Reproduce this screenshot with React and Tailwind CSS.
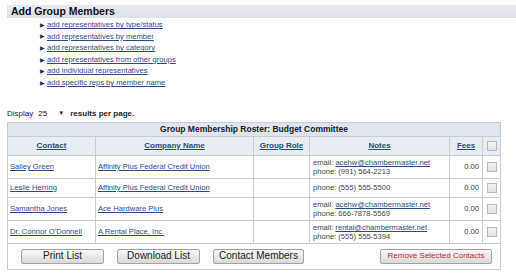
import React from 'react';

const links = [
  'add representatives by type/status',
  'add representatives by member',
  'add representatives by category',
  'add representatives from other groups',
  'add individual representatives',
  'add specific reps by member name',
];

const rows = [
  { name: 'Salley Green', company: 'Affinity Plus Federal Credit Union', email: 'acehw@chambermaster.net', phone: 'phone: (991) 564-2213', h: 'h-[23px]' },
  { name: 'Leslie Herring', company: 'Affinity Plus Federal Credit Union', email: null, phone: 'phone: (555) 555-5500', h: 'h-[19px]' },
  { name: 'Samantha Jones', company: 'Ace Hardware Plus', email: 'acehw@chambermaster.net', phone: 'phone: 666-7878-5569', h: 'h-[23px]' },
  { name: "Dr. Connor O'Donnell", company: 'A Rental Place, Inc.', email: 'rental@chambermaster.net', phone: 'phone: (555) 555-5394', h: 'h-[23px]' },
];

const Check = () => (
  <span className="inline-block w-[10px] h-[10px] border border-[#b5b9bd] bg-gradient-to-b from-[#f4f4f4] to-[#e2e2e2] align-middle"></span>
);

const Btn = ({ children, className = '' }) => (
  <button className={`h-[15px] whitespace-nowrap rounded-[2px] border border-[#9ea3a8] bg-gradient-to-b from-[#f8f8f8] to-[#d9d9d9] leading-none ${className}`}>
    {children}
  </button>
);

const App = () => {
  return (
    <div className="w-[516px] h-[278px] bg-white overflow-hidden font-['Liberation_Sans',Arial,sans-serif] text-[#333]">
      {/* HEADER */}
      <div className="mt-[5px] ml-[7px] h-[13px] bg-gradient-to-b from-[#e7ebef] to-[#dbe1e7] flex items-center pl-[4px]">
        <h1 className="text-[10.5px] font-bold text-[#111] leading-none">Add Group Members</h1>
      </div>

      {/* LINKS */}
      <ul className="pl-[40px] pt-[1px]">
        {links.map(l => (
          <li key={l} className="h-[11.6px] flex items-center gap-[2px] text-[7.6px]">
            <span className="text-[6px] leading-none text-[#1b2f5e]">▶</span>
            <a className="text-[#2d4a85] underline">{l}</a>
          </li>
        ))}
      </ul>

      {/* DISPLAY */}
      <div className="mt-[19px] ml-[7px] flex items-center h-[12px] text-[8px] text-[#222]">
        <span>Display</span>
        <span className="ml-[2px] w-[32px] h-[12px] bg-white flex items-center justify-between px-[3px]">
          <span>25</span>
          <span className="text-[6px]">▼</span>
        </span>
        <span className="ml-[3px] font-bold">results per page.</span>
      </div>

      {/* ROSTER TABLE */}
      <table className="mt-[2px] ml-[7px] w-[494px] border-collapse border border-[#c9ccd0] text-[7.6px] table-fixed">
        <colgroup>
          <col className="w-[88px]" />
          <col className="w-[158px]" />
          <col className="w-[56px]" />
          <col className="w-[140px]" />
          <col className="w-[33px]" />
          <col />
        </colgroup>
        <thead>
          <tr className="h-[14px] bg-[#dfe6ed]">
            <th colSpan={6} className="text-[8.5px] font-bold text-[#222] border border-[#c9ccd0]">Group Membership Roster: Budget Committee</th>
          </tr>
          <tr className="h-[19px] bg-[#e6ecf2]">
            {['Contact', 'Company Name', 'Group Role', 'Notes', 'Fees'].map(h => (
              <th key={h} className="border border-[#c9ccd0] font-bold text-[8px]">
                <a className="text-[#2d4a85] underline">{h}</a>
              </th>
            ))}
            <th className="border border-[#c9ccd0]"><Check /></th>
          </tr>
        </thead>
        <tbody>
          {rows.map(r => (
            <tr key={r.name} className={r.h}>
              <td className="border border-[#c9ccd0] px-[2px]"><a className="text-[#2d4a85] underline">{r.name}</a></td>
              <td className="border border-[#c9ccd0] px-[2px]"><a className="text-[#2d4a85] underline">{r.company}</a></td>
              <td className="border border-[#c9ccd0]"></td>
              <td className="border border-[#c9ccd0] px-[3px] leading-[9px] text-[#444]">
                {r.email && (
                  <div>email: <a className="text-[#2d4a85] underline">{r.email}</a></div>
                )}
                <div>{r.phone}</div>
              </td>
              <td className="border border-[#c9ccd0] text-right pr-[3px] text-[#333]">0.00</td>
              <td className="border border-[#c9ccd0] text-center"><Check /></td>
            </tr>
          ))}
          <tr className="h-[26px]">
            <td colSpan={6} className="border border-[#c9ccd0]">
              <div className="flex items-center pl-[13px] pr-[8px]">
                <Btn className="w-[83px] text-[10px] text-[#222]">Print List</Btn>
                <Btn className="w-[83px] ml-[13px] text-[10px] text-[#222]">Download List</Btn>
                <Btn className="w-[91px] ml-[13px] text-[10px] text-[#222]">Contact Members</Btn>
                <Btn className="w-[112px] ml-auto text-[8px] text-[#c0282d]">Remove Selected Contacts</Btn>
              </div>
            </td>
          </tr>
        </tbody>
      </table>
    </div>
  );
};

export default App;
